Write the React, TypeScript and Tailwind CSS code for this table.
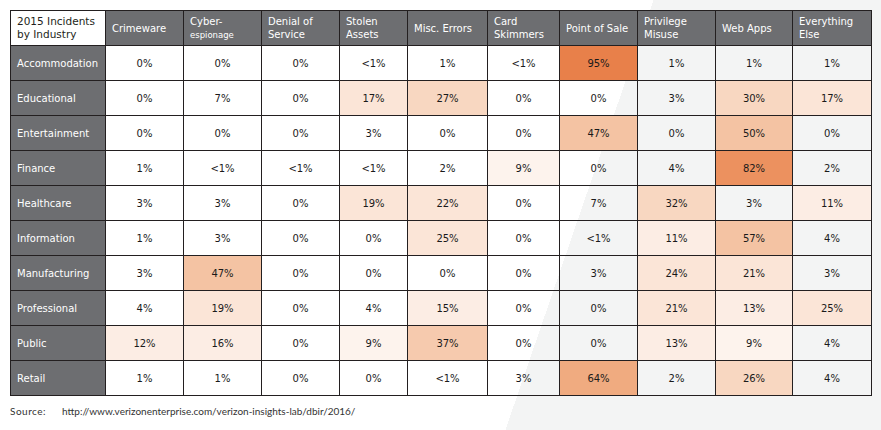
import React from 'react';

const columns: { label: React.ReactNode }[] = [
  { label: 'Crimeware' },
  {
    label: (
      <>
        Cyber-
        <br />
        <span className="text-[8.5px]">espionage</span>
      </>
    ),
  },
  { label: <>Denial of<br />Service</> },
  { label: <>Stolen<br />Assets</> },
  { label: 'Misc. Errors' },
  { label: <>Card<br />Skimmers</> },
  { label: 'Point of Sale' },
  { label: <>Privilege<br />Misuse</> },
  { label: 'Web Apps' },
  { label: <>Everything<br />Else</> },
];

const widths = [95, 78, 78, 78, 68, 80, 72, 78, 78, 77, 79];

const rows: [string, string[]][] = [
  ['Accommodation', ['0%', '0%', '0%', '<1%', '1%', '<1%', '95%', '1%', '1%', '1%']],
  ['Educational', ['0%', '7%', '0%', '17%', '27%', '0%', '0%', '3%', '30%', '17%']],
  ['Entertainment', ['0%', '0%', '0%', '3%', '0%', '0%', '47%', '0%', '50%', '0%']],
  ['Finance', ['1%', '<1%', '<1%', '<1%', '2%', '9%', '0%', '4%', '82%', '2%']],
  ['Healthcare', ['3%', '3%', '0%', '19%', '22%', '0%', '7%', '32%', '3%', '11%']],
  ['Information', ['1%', '3%', '0%', '0%', '25%', '0%', '<1%', '11%', '57%', '4%']],
  ['Manufacturing', ['3%', '47%', '0%', '0%', '0%', '0%', '3%', '24%', '21%', '3%']],
  ['Professional', ['4%', '19%', '0%', '4%', '15%', '0%', '0%', '21%', '13%', '25%']],
  ['Public', ['12%', '16%', '0%', '9%', '37%', '0%', '0%', '13%', '9%', '4%']],
  ['Retail', ['1%', '1%', '0%', '0%', '<1%', '3%', '64%', '2%', '26%', '4%']],
];

// heat colour by share
function heat(v: string): string {
  const n = v.startsWith('<') ? 0 : parseInt(v, 10);
  if (n >= 90) return 'bg-[#e8804a]';
  if (n >= 75) return 'bg-[#ec915f]';
  if (n >= 60) return 'bg-[#f0ab80]';
  if (n >= 45) return 'bg-[#f4c3a3]';
  if (n >= 35) return 'bg-[#f6caae]';
  if (n >= 26) return 'bg-[#f8d7c1]';
  if (n >= 17) return 'bg-[#fbe5d7]';
  if (n >= 11) return 'bg-[#fcede4]';
  if (n >= 9) return 'bg-[#fdf3ed]';
  return '';
}

const App: React.FC = () => {
  return (
    <div
      className="w-[881px] h-[430px] bg-[linear-gradient(109deg,#ffffff_63.5%,#f3f4f4_63.5%)] pt-[10px] pl-[10px]"
      style={{ fontFamily: '"DejaVu Sans", Verdana, sans-serif' }}
    >
      <table className="border-collapse table-fixed w-[862px]">
        <colgroup>
          {widths.map((w, i) => (
            <col key={i} style={{ width: w }} />
          ))}
        </colgroup>
        <thead>
          <tr className="h-[35px]">
            <th className="border border-[#231f20] bg-white text-left font-normal text-[10.5px] leading-[13px] text-[#231f20] px-[6px]">
              2015 Incidents
              <br />
              by Industry
            </th>
            {columns.map((c, i) => (
              <th
                key={i}
                className="border border-[#231f20] bg-[#6d6e71] text-left font-normal text-[10px] leading-[13px] text-white px-[6px]"
              >
                {c.label}
              </th>
            ))}
          </tr>
        </thead>
        <tbody>
          {rows.map(([name, vals]) => (
            <tr key={name} className="h-[35px]">
              <td className="border border-[#231f20] bg-[#6d6e71] text-white text-[10px] px-[6px]">
                {name}
              </td>
              {vals.map((v, i) => (
                <td
                  key={i}
                  className={`border border-[#231f20] text-center text-[10px] text-[#1a1a1a] ${heat(v)}`}
                >
                  {v}
                </td>
              ))}
            </tr>
          ))}
        </tbody>
      </table>
      <div
        className="flex mt-[8px] text-[10px] text-[#333333]"
        style={{ fontFamily: 'Lato, "Liberation Sans", sans-serif' }}
      >
        <span className="w-[52px] tracking-[0.5px]">Source:</span>
        <span>http://www.verizonenterprise.com/verizon-insights-lab/dbir/2016/</span>
      </div>
    </div>
  );
};

export default App;
